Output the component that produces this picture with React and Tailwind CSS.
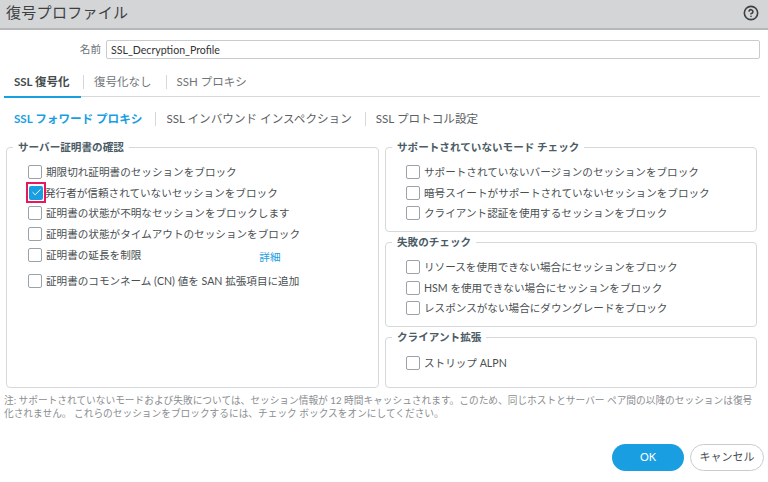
import { CircleHelp, Check } from 'lucide-react';

const FONT = 'font-["Lato","Noto_Sans_CJK_JP",sans-serif]';

const CheckRow = ({ label, highlight, className = '' }) => (
  <div className={`flex items-center h-[14px] ${className}`}>
    {highlight ? (
      <span className="flex items-center justify-center w-[20px] h-[21px] -ml-[2px] -mr-[3px] border-2 border-[#e8185e] shrink-0">
        <span className="flex items-center justify-center w-[14px] h-[14px] bg-[#1a9ee2] rounded-[2px]">
          <Check size={11} strokeWidth={2} className="text-white" />
        </span>
      </span>
    ) : (
      <span className="w-[14px] h-[14px] bg-white border border-[#9ba3a8] rounded-[2px] shrink-0" />
    )}
    <span className={`${highlight ? 'ml-[2px]' : 'ml-[4px]'} text-[10.6px] leading-[14px] text-[#4a4f52] whitespace-nowrap`}>{label}</span>
  </div>
);

const Group = ({ title, className = '', children }) => (
  <fieldset className={`border border-[#d6d8da] rounded-[4px] px-[20px] min-w-0 ${className}`}>
    <legend className="-ml-[14px] px-[5px] -mb-[2px] text-[10.6px] leading-[14px] font-bold text-[#4b5c66] whitespace-nowrap">{title}</legend>
    {children}
  </fieldset>
);

const Sep = ({ className = '' }) => <span className={`w-px h-[14px] bg-[#d6d8da] ${className}`} />;

export default function App() {
  return (
    <div className={`${FONT} w-[768px] h-[482px] overflow-hidden bg-white flex flex-col`}>
      <div className="h-[30px] shrink-0 bg-[#d4d5d7] border-b-2 border-[#b5b7b9] flex items-center justify-between pl-[6px] pr-[9px] pb-[3px]">
        <h1 className="text-[15px] text-[#3c4043] tracking-[0.3px]">復号プロファイル</h1>
        <CircleHelp size={16} strokeWidth={2.4} className="text-[#3c4043]" />
      </div>

      <div className="flex items-center mt-[10px] h-[19px] pr-[8px]">
        <label className="w-[101px] text-right text-[10.6px] text-[#6f7477]">名前</label>
        <input
          readOnly
          value="SSL_Decryption_Profile"
          className="ml-[5px] flex-1 h-[19px] border border-[#c9cccf] rounded-[2px] px-[4px] text-[10.6px] text-[#333] outline-none"
        />
      </div>

      <div className="flex items-center ml-[4px] mr-[8px] mt-[11px] pb-[2px] h-[27px] border-b border-[#d6d8da] text-[11.5px]">
        <span className="relative h-[25px] w-[77px] pl-[10px] flex items-center font-bold text-[#454a4d]">
          SSL 復号化
          <span className="absolute left-0 right-0 -bottom-[3px] h-[2px] bg-[#1a9ee2]" />
        </span>
        <Sep className="ml-[2px]" />
        <span className="ml-[10px] text-[#6f7477]">復号化なし</span>
        <Sep className="ml-[14px]" />
        <span className="ml-[10px] text-[#6f7477]">SSH プロキシ</span>
      </div>

      <div className="flex items-center ml-[14px] mt-[14px] h-[16px] text-[11.6px] text-[#5b6063]">
        <span className="font-bold text-[#1a9ee2]">SSL フォワード プロキシ</span>
        <Sep className="ml-[13px]" />
        <span className="ml-[10px]">SSL インバウンド インスペクション</span>
        <Sep className="ml-[13px]" />
        <span className="ml-[10px]">SSL プロトコル設定</span>
      </div>

      <div className="flex gap-[6px] ml-[6px] mr-[11px] mt-[13px] h-[248px]">
        <Group title="サーバー証明書の確認" className="w-[373px] shrink-0">
          <div className="flex flex-col gap-[6.5px] mt-[13px] ml-[1px]">
            <CheckRow label="期限切れ証明書のセッションをブロック" />
            <CheckRow highlight label="発行者が信頼されていないセッションをブロック" />
            <CheckRow label="証明書の状態が不明なセッションをブロックします" />
            <CheckRow label="証明書の状態がタイムアウトのセッションをブロック" />
            <div className="flex items-center">
              <CheckRow label="証明書の延長を制限" />
              <a className="ml-[118px] translate-y-[3px] text-[10.6px] text-[#1a9ee2]">詳細</a>
            </div>
            <CheckRow label="証明書のコモンネーム (CN) 値を SAN 拡張項目に追加" className="mt-[5px]" />
          </div>
        </Group>

        <div className="flex-1 flex flex-col gap-[3px] min-w-0">
          <Group title="サポートされていないモード チェック" className="h-[92px] shrink-0">
            <div className="flex flex-col gap-[6.5px] mt-[13px]">
              <CheckRow label="サポートされていないバージョンのセッションをブロック" />
              <CheckRow label="暗号スイートがサポートされていないセッションをブロック" />
              <CheckRow label="クライアント認証を使用するセッションをブロック" />
            </div>
          </Group>
          <Group title="失敗のチェック" className="h-[92px] shrink-0">
            <div className="flex flex-col gap-[6.5px] mt-[13px]">
              <CheckRow label="リソースを使用できない場合にセッションをブロック" />
              <CheckRow label="HSM を使用できない場合にセッションをブロック" />
              <CheckRow label="レスポンスがない場合にダウングレードをブロック" />
            </div>
          </Group>
          <Group title="クライアント拡張" className="flex-1">
            <CheckRow label="ストリップ ALPN" className="mt-[14px]" />
          </Group>
        </div>
      </div>

      <p className="ml-[4px] w-[755px] mt-[6px] text-[9.7px] leading-[13px] text-[#8a8e91]">
        注: サポートされていないモードおよび失敗については、セッション情報が 12 時間キャッシュされます。このため、同じホストとサーバー ペア間の以降のセッションは復号化されません。 これらのセッションをブロックするには、チェック ボックスをオンにしてください。
      </p>

      <div className="flex justify-end gap-[6px] mt-[24px] pr-[4px]">
        <button className="w-[72px] h-[27px] rounded-full bg-[#1a9ee2] text-white text-[11px]">OK</button>
        <button className="w-[74px] h-[27px] rounded-full bg-white border border-[#c9cccf] text-[#4a4f52] text-[11px]">キャンセル</button>
      </div>
    </div>
  );
}
